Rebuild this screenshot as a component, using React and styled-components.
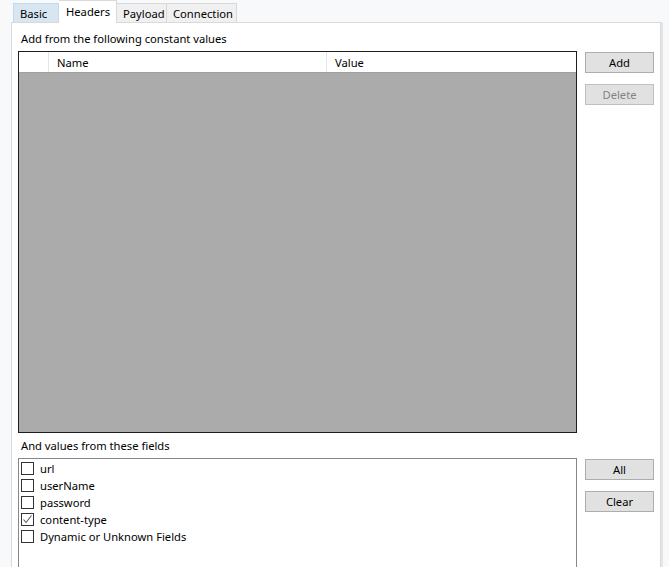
import styled, { createGlobalStyle } from 'styled-components';

const GlobalStyle = createGlobalStyle`
  html, body {
    margin: 0;
    padding: 0;
    background: #f8f9fb;
    overflow: hidden;
  }
  body {
    font-family: 'Segoe UI', 'Noto Sans', sans-serif;
    font-size: 11.2px;
    color: #000;
  }
`;

const tabs = [
  { label: 'Basic', state: 'hover', width: 46 },
  { label: 'Headers', state: 'active', width: 58 },
  { label: 'Payload', width: 50 },
  { label: 'Connection', width: 70 },
];

const fields = [
  { name: 'url' },
  { name: 'userName' },
  { name: 'password' },
  { name: 'content-type', checked: true },
  { name: 'Dynamic or Unknown Fields' },
];

const Check = () => (
  <svg width='11' height='11' viewBox='0 0 11 11'>
    <polyline points='1.5,5.5 4,8.5 9.5,1.5' fill='none' stroke='#5a5a5a' strokeWidth='1.1' />
  </svg>
);

const App = () => (
  <Wrapper>
    <GlobalStyle />
    <TabStrip>
      {tabs.map((t) => (
        <Tab key={t.label} $state={t.state} $w={t.width}>
          {t.label}
        </Tab>
      ))}
    </TabStrip>

    <Page>
      <Label>Add from the following constant values</Label>
      <Row>
        <Grid>
          <GridHead>
            <HeadCell $w='30px' />
            <HeadCell $w='278px'>Name</HeadCell>
            <HeadCell $w='auto' $last>Value</HeadCell>
          </GridHead>
        </Grid>
        <Buttons>
          <Button>Add</Button>
          <Button disabled>Delete</Button>
        </Buttons>
      </Row>

      <Label $second>And values from these fields</Label>
      <Row>
        <List>
          {fields.map((f) => (
            <Item key={f.name}>
              <Box>{f.checked && <Check />}</Box>
              <span>{f.name}</span>
            </Item>
          ))}
        </List>
        <Buttons>
          <Button>All</Button>
          <Button>Clear</Button>
        </Buttons>
      </Row>
    </Page>
  </Wrapper>
);

const Wrapper = styled.main`
  padding-left: 11px;
  height: 567px;
`;

const TabStrip = styled.div`
  display: flex;
  align-items: flex-end;
  height: 23px;
  padding-left: 2px;
  margin-bottom: -1px;
  position: relative;
  z-index: 1;
`;

const Tab = styled.div`
  box-sizing: border-box;
  width: ${(p) => p.$w}px;
  height: ${(p) => (p.$state === 'active' ? '23px' : '20px')};
  padding: ${(p) => (p.$state === 'active' ? '3px 0 0 7px' : '2px 0 0 6px')};
  border: 1px solid ${(p) => (p.$state === 'hover' ? '#c5d9ec' : '#d9d9d9')};
  border-bottom: ${(p) => (p.$state === 'active' ? 'none' : '1px solid #d9d9d9')};
  background: ${(p) =>
    p.$state === 'active' ? '#ffffff' : p.$state === 'hover' ? '#d8e6f2' : '#f0f0f0'};
  line-height: 15px;
  white-space: nowrap;

  & + & {
    border-left: ${(p) => (p.$state === 'active' ? '1px solid #d9d9d9' : 'none')};
  }
`;

const Page = styled.section`
  box-sizing: border-box;
  width: 650px;
  height: 600px;
  background: #fff;
  border: 1px solid #d9d9d9;
  box-shadow: 2px 0 0 #e6e6e6;
  padding: 8px 6px 0 6px;
`;

const Label = styled.div`
  line-height: 15px;
  padding-left: 3px;
  margin-top: ${(p) => (p.$second ? '5px' : '0')};
  margin-bottom: ${(p) => (p.$second ? '5px' : '5px')};
`;

const Row = styled.div`
  display: flex;
  gap: 8px;
  align-items: flex-start;
`;

const Grid = styled.div`
  box-sizing: border-box;
  width: 559px;
  height: 382px;
  border: 1px solid #1e1e1e;
  background: #ababab;
`;

const GridHead = styled.div`
  display: flex;
  height: 20px;
  background: #fff;
  border-bottom: 1px solid #a0a0a0;
`;

const HeadCell = styled.div`
  box-sizing: border-box;
  width: ${(p) => p.$w};
  flex: ${(p) => (p.$last ? '1' : 'none')};
  border-right: ${(p) => (p.$last ? 'none' : '1px solid #e5e5e5')};
  padding-left: 8px;
  line-height: 21px;
`;

const Buttons = styled.div`
  display: flex;
  flex-direction: column;
  gap: 11px;
  padding-top: 1px;
`;

const Button = styled.button`
  box-sizing: border-box;
  width: 69px;
  height: 21px;
  padding: 0;
  font: inherit;
  line-height: 18px;
  color: ${(p) => (p.disabled ? '#838383' : '#000')};
  background: #e1e1e1;
  border: 1px solid ${(p) => (p.disabled ? '#bfbfbf' : '#adadad')};
  border-radius: 0;
`;

const List = styled.div`
  box-sizing: border-box;
  width: 559px;
  height: 130px;
  border: 1px solid #828790;
  padding: 1px 2px;
`;

const Item = styled.div`
  display: flex;
  align-items: center;
  gap: 6px;
  height: 17px;
`;

const Box = styled.span`
  box-sizing: border-box;
  width: 13px;
  height: 13px;
  border: 1px solid #333;
  background: #fff;
  display: flex;
  align-items: center;
  justify-content: center;
`;

export default App;
